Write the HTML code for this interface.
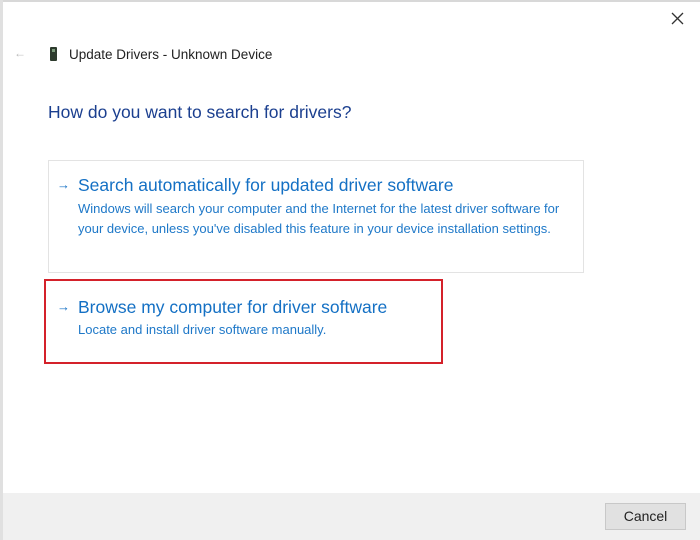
<!DOCTYPE html>
<html><head><style>
body{margin:0;width:700px;height:540px;overflow:hidden;background:#fff;font-family:"Liberation Sans",sans-serif;position:relative}
.top{position:absolute;left:0;top:0;width:700px;height:2px;background:#d8d8d8}
.lft{position:absolute;left:0;top:0;width:3px;height:540px;background:#e0e0e0}
.a{position:absolute;white-space:nowrap}
.foot{position:absolute;left:3px;top:493px;width:697px;height:47px;background:#f0f0f0}
.btn{position:absolute;left:605px;top:503px;width:79px;height:25px;background:#e1e1e1;border:1px solid #c8c8c8;font-size:14px;color:#222;text-align:center;line-height:25px}
.box{position:absolute;left:48px;top:160px;width:534px;height:111px;border:1px solid #e3e3e3}
.red{position:absolute;left:44px;top:279px;width:395px;height:81px;border:2px solid #d4212a}
.t{color:#1470c4;font-size:17.5px}
.s{color:#1e78c8;font-size:13px;line-height:20px}
.ar{color:#1470c4;font-size:13px}
</style></head><body>
<div class="top"></div><div class="lft"></div>
<svg class="a" style="left:671px;top:12px" width="13" height="13" viewBox="0 0 13 13"><path d="M1 1L12 12M12 1L1 12" stroke="#333" stroke-width="1.3"/></svg>
<div class="a" style="left:14px;top:46px;font-size:12px;color:#bbb">←</div>
<div class="a" style="left:50px;top:47px;width:7px;height:14px;background:#2d3b2d;border-radius:1px"></div>
<div class="a" style="left:52px;top:49px;width:3px;height:3px;background:#7a9a7a"></div>
<div class="a" style="left:69px;top:47px;font-size:13.5px;color:#222">Update Drivers - Unknown Device</div>
<div class="a" style="left:48px;top:102px;font-size:17.5px;color:#1b3f8f">How do you want to search for drivers?</div>
<div class="box"></div>
<div class="a ar" style="left:57px;top:177px">→</div>
<div class="a t" style="left:78px;top:175px">Search automatically for updated driver software</div>
<div class="a s" style="left:78px;top:199px">Windows will search your computer and the Internet for the latest driver software for<br>your device, unless you've disabled this feature in your device installation settings.</div>
<div class="red"></div>
<div class="a ar" style="left:57px;top:299px">→</div>
<div class="a t" style="left:78px;top:297px">Browse my computer for driver software</div>
<div class="a s" style="left:78px;top:320px">Locate and install driver software manually.</div>
<div class="foot"></div>
<div class="btn">Cancel</div>
</body></html>
